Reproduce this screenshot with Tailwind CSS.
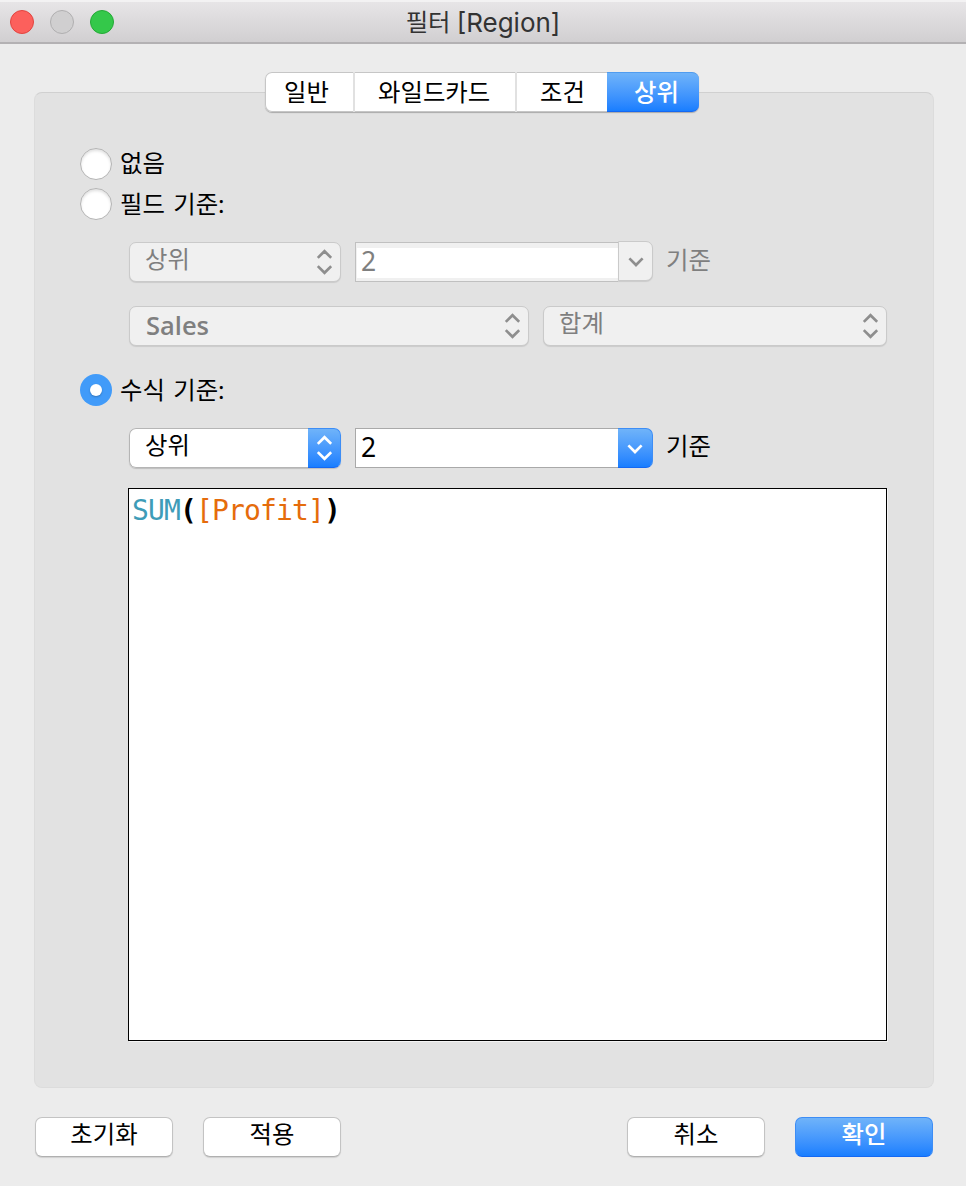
<!DOCTYPE html>
<html lang="ko">
<head>
<meta charset="utf-8">
<title>필터 [Region]</title>
<script src="https://cdn.jsdelivr.net/npm/@tailwindcss/browser@4"></script>
</head>
<body class="w-[966px] h-[1186px] overflow-hidden bg-[#ececec] font-['Noto_Sans_CJK_KR',sans-serif] text-[24.4px] leading-[36px] text-black whitespace-nowrap">
<svg class="hidden">
  <symbol id="updown" viewBox="0 0 16 26"><path d="M1.8 8.9 8.5 2.2l6.7 6.7M1.8 17.1l6.7 6.7 6.7-6.7" fill="none" stroke="currentColor" stroke-width="2.7" stroke-linecap="butt" stroke-linejoin="miter"/></symbol>
  <symbol id="down" viewBox="0 0 16 10"><path d="M1.4 1.4 8 8l6.6-6.6" fill="none" stroke="currentColor" stroke-width="2.7" stroke-linecap="butt" stroke-linejoin="miter"/></symbol>
</svg>

<header class="h-11 grid grid-cols-[1fr_auto_1fr] items-start bg-linear-to-b from-[#e8e6e8] to-[#d1cfd1] border-b-2 border-[#b3b1b3] shadow-[inset_0_2px_0_#f3f2f3]">
  <div class="flex gap-4 pl-[10px] pt-[10px]">
    <span class="size-6 rounded-full bg-[#fc605c] border border-[#e2443f]"></span>
    <span class="size-6 rounded-full bg-[#d0cfd0] border border-[#b0afb0]"></span>
    <span class="size-6 rounded-full bg-[#34c84a] border border-[#24a936]"></span>
  </div>
  <h1 class="pt-[3px] text-[#333] flex"><span class="w-[51px]">필터</span><span class="font-['Inter'] text-[26px] pt-[2px]">[Region]</span></h1>
  <span></span>
</header>

<main class="pt-7 pl-[34px] pr-8">
  <nav class="relative z-10 ml-[231px] w-[434px] h-10 flex rounded-[7px] bg-white shadow-[0_0_0_1px_#c6c6c6_inset,0_1px_1px_#00000040]">
    <button class="w-[90px] h-10 pb-[3px] pl-[19px] text-left border-r-2 border-[#e1e1e1]">일반</button>
    <button class="w-[162px] h-10 pb-[3px] pl-[23px] text-left border-r-2 border-[#e1e1e1]">와일드카드</button>
    <button class="w-[90px] h-10 pb-[3px] pl-[23px] text-left">조건</button>
    <button class="w-[92px] h-10 pb-[3px] pl-[27px] text-left font-medium text-white rounded-r-[7px] bg-linear-to-b from-[#6fb3f9] to-[#187eff] border-y border-t-[#4f9cf0] border-b-[#1568f2]">상위</button>
  </nav>

  <section class="-mt-5 h-[996px] rounded-[8px] bg-[#e2e2e2] border border-[#dcdcdc] border-t-[#d0d0d0] pl-[45px] pt-[55px]">
    <label class="flex h-8 items-center gap-2">
      <span class="size-8 rounded-full bg-white border border-[#b4b4b4] shadow-[inset_0_2px_3px_#00000020]"></span>
      <span class="-mt-[4px]">없음</span>
    </label>
    <label class="mt-2 flex h-8 items-center gap-2">
      <span class="size-8 rounded-full bg-white border border-[#b4b4b4] shadow-[inset_0_2px_3px_#00000020]"></span>
      <span class="-mt-[2px] [word-spacing:1.5px]">필드 기준<span class="font-['Noto_Sans']">:</span></span>
    </label>

    <div class="mt-[21px] ml-[49px] flex text-[#7f7f7f]">
      <div class="mt-px w-[212px] h-10 flex justify-between rounded-[7px] bg-[#f0f0f0] border border-[#cacaca] shadow-[0_1px_1px_#0000001a] pl-[15px] pr-2">
        <span class="-mt-[3px]">상위</span><svg class="mt-[6px] w-4 h-[26px] text-[#8e8e8e]"><use href="#updown"/></svg>
      </div>
      <div class="ml-[14px] mt-px w-[263px] h-10 bg-white border border-r-0 border-[#c0c0c0] shadow-[inset_1px_5px_0_#f0f0f0,inset_0_-3px_0_#f0f0f0] pl-[5px] font-['Noto_Sans'] text-[26.5px]">2</div>
      <div class="w-[35px] h-10 flex justify-center rounded-r-[7px] bg-[#f0f0f0] border border-[#cacaca] shadow-[0_1px_1px_#0000001a]">
        <svg class="mt-[15px] w-4 h-[10px] text-[#8e8e8e]"><use href="#down"/></svg>
      </div>
      <span class="ml-[13px]">기준</span>
    </div>

    <div class="mt-6 ml-[49px] flex gap-[14px] text-[#7f7f7f]">
      <div class="w-[400px] h-10 flex justify-between rounded-[7px] bg-[#f0f0f0] border border-[#cacaca] shadow-[0_1px_1px_#0000001a] pl-4 pr-2">
        <span class="font-['Open_Sans'] font-semibold text-[25.5px]">Sales</span><svg class="mt-[6px] w-4 h-[26px] text-[#8e8e8e]"><use href="#updown"/></svg>
      </div>
      <div class="w-[344px] h-10 flex justify-between rounded-[7px] bg-[#f0f0f0] border border-[#cacaca] shadow-[0_1px_1px_#0000001a] pl-[15px] pr-2">
        <span class="-mt-[3px]">합계</span><svg class="mt-[6px] w-4 h-[26px] text-[#8e8e8e]"><use href="#updown"/></svg>
      </div>
    </div>

    <label class="mt-7 flex h-8 items-center gap-2">
      <span class="size-8 rounded-full bg-[#419bf9] flex items-center justify-center"><span class="size-3 rounded-full bg-white shadow-[0_1px_2px_#00000040]"></span></span>
      <span class="-mt-[2px] [word-spacing:1.5px]">수식 기준<span class="font-['Noto_Sans']">:</span></span>
    </label>

    <div class="mt-[22px] ml-[49px] flex">
      <div class="w-[212px] h-10 flex rounded-[7px] bg-white shadow-[0_1px_1px_#0000002a]">
        <span class="w-[179px] h-10 rounded-l-[7px] border border-r-0 border-[#b5b5b5] pl-[15px]"><span class="block -mt-[3px]">상위</span></span>
        <span class="w-[33px] h-10 flex justify-center rounded-r-[7px] text-white bg-linear-to-b from-[#6fb3f9] to-[#187eff] border border-l-0 border-[#3d8df5] border-b-[#1568f2]"><svg class="mt-[6px] w-4 h-[26px]"><use href="#updown"/></svg></span>
      </div>
      <div class="ml-[14px] w-[263px] h-10 bg-white border border-r-0 border-[#a9a9a9] pl-[5px] font-['Noto_Sans'] text-[26.5px]">2</div>
      <div class="w-[35px] h-10 flex justify-center rounded-r-[7px] text-white bg-linear-to-b from-[#6fb3f9] to-[#187eff] border border-l-0 border-[#3d8df5] border-b-[#1568f2]">
        <svg class="mt-[15px] w-4 h-[10px]"><use href="#down"/></svg>
      </div>
      <span class="ml-[13px] -mt-px">기준</span>
    </div>

    <div class="mt-5 ml-12 w-[759px] h-[553px] bg-white border border-black shadow-[1px_1px_0_#f4f4f4] pl-[3px] pt-[4px] font-['DejaVu_Sans_Mono'] text-[28px] tracking-[-0.85px]"><span class="text-[#3e9cb8]">SUM</span><b>(</b><span class="text-[#e56c0c]">[Profit]</span><b>)</b></div>
  </section>

  <footer class="mt-[29px] flex px-px text-center">
    <button class="w-[138px] h-10 flex justify-center rounded-[7px] bg-white border border-[#c3c3c3] border-b-[#b0b0b0] shadow-[0_1px_1px_#0000001f]"><span class="-mt-[3px]">초기화</span></button>
    <button class="ml-[30px] w-[138px] h-10 flex justify-center rounded-[7px] bg-white border border-[#c3c3c3] border-b-[#b0b0b0] shadow-[0_1px_1px_#0000001f]"><span class="-mt-[3px]">적용</span></button>
    <button class="ml-auto w-[138px] h-10 flex justify-center rounded-[7px] bg-white border border-[#c3c3c3] border-b-[#b0b0b0] shadow-[0_1px_1px_#0000001f]"><span class="-mt-[3px]">취소</span></button>
    <button class="ml-[30px] w-[138px] h-10 flex justify-center rounded-[7px] text-white font-medium bg-linear-to-b from-[#6fb3f9] to-[#187eff] border border-[#3d8df5] border-b-[#1568f2]"><span class="-mt-[3px]">확인</span></button>
  </footer>
</main>
</body>
</html>
